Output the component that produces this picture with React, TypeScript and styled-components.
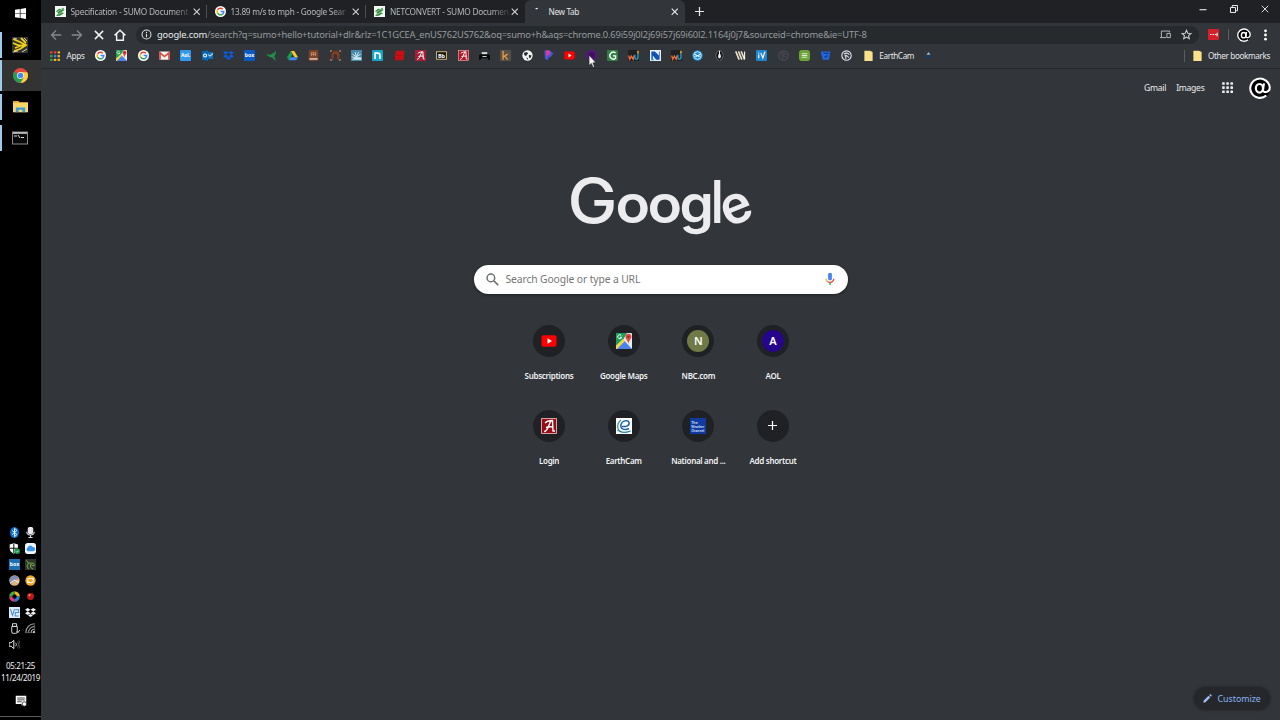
import React from 'react';
import styled, { createGlobalStyle } from 'styled-components';

const Global = createGlobalStyle`
  * { box-sizing: border-box; }
  body { margin: 0; background: #323539; overflow: hidden; }
  body, button, input { font-family: 'Noto Sans', 'Open Sans', sans-serif; }
`;

/* ---------- shell ---------- */
const Desktop = styled.div`
  display: grid;
  grid-template-columns: 41px 1fr;
  width: 1280px;
  height: 720px;
  background: #323539;
  position: relative;
`;
const Taskbar = styled.aside`
  display: flex;
  flex-direction: column;
  background: #000;
  height: 720px;
`;
const StartButton = styled.div`
  height: 29px;
  display: flex;
  align-items: center;
  justify-content: center;
  padding-bottom: 2px;
`;
const TaskItem = styled.div<{ $active?: boolean }>`
  height: 31px;
  display: flex;
  align-items: center;
  justify-content: center;
  background: ${p => (p.$active ? '#333333' : 'transparent')};
  &::before {
    content: '';
    width: 2px;
    margin-right: auto;
    height: ${p => (p.$active ? 31 : 26)}px;
    background: #9ccbee;
  }
  &::after { content: ''; width: 3px; margin-left: auto; }
`;
const Tray = styled.div`
  margin-top: auto;
  display: grid;
  grid-template-columns: 16px 16px;
  grid-auto-rows: 16px;
  place-items: center;
  padding-left: 6px;
`;
const Clock = styled.div`
  height: 36px;
  padding-top: 8px;
  color: #f2f2f2;
  font-size: 8px;
  line-height: 11.5px;
  text-align: center;
  letter-spacing: -0.36px;
  white-space: nowrap;
`;
const Notify = styled.div`
  height: 28px;
  display: flex;
  align-items: center;
  justify-content: center;
  padding-bottom: 3px;
`;
const TaskbarEnd = styled.div`
  height: 4px;
  border-top: 1px solid #5c5c5c;
`;

/* ---------- browser ---------- */
const Browser = styled.main`
  display: flex;
  flex-direction: column;
  min-width: 0;
`;
const TabStrip = styled.header`
  display: flex;
  height: 23px;
  background: #202124;
`;
const Tab = styled.div<{ $active?: boolean; $w: number; $pad?: number; $line?: boolean }>`
  width: ${p => p.$w}px;
  height: 23px;
  display: flex;
  align-items: center;
  padding: 0 7px 0 ${p => p.$pad ?? 7.5}px;
  background: ${p => (p.$active ? '#323539' : 'transparent')};
  border-radius: 6px 6px 0 0;
  color: ${p => (p.$active ? '#e2e4e6' : '#b4b7ba')};
  position: relative;
  &::after {
    content: '';
    position: absolute;
    right: 0;
    top: 5px;
    height: 13px;
    width: 1px;
    background: ${p => (p.$line ? '#4c4f53' : 'transparent')};
  }
`;
const TabTitle = styled.span<{ $ls: number; $fade?: boolean }>`
  flex: 1;
  margin-left: 5px;
  white-space: nowrap;
  font-size: 8.3px;
  line-height: 14px;
  letter-spacing: ${p => p.$ls}px;
  ${p => p.$fade && 'mask-image: linear-gradient(90deg, #000 84%, rgba(0,0,0,.25) 96%);'}
`;
const NewTab = styled.div`
  padding: 7px 0 0 10px;
`;
const WindowButtons = styled.div`
  margin-left: auto;
  display: flex;
  gap: 22.7px;
  padding: 5px 11.5px 0 0;
`;
const Toolbar = styled.div`
  height: 22px;
  display: flex;
  align-items: center;
  background: #323539;
  padding: 1px 0 0 9px;
`;
const NavIcons = styled.div`
  display: flex;
  gap: 9.3px;
  width: 86px;
`;
const Omnibox = styled.div`
  width: 1063px;
  height: 18px;
  border-radius: 9px;
  background: #272a2d;
  display: flex;
  align-items: center;
  padding: 0 7px 0 5px;
  gap: 10px;
`;
const Url = styled.span`
  flex: 1;
  margin-left: -5px;
  font-size: 9.33px;
  line-height: 16px;
  color: #969b9f;
  letter-spacing: -0.185px;
  white-space: nowrap;
  b { font-weight: 400; color: #e8eaed; }
`;
const ToolbarEnd = styled.div`
  display: flex;
  align-items: center;
  padding-left: 9px;
`;
const Divider = styled.i<{ $m: string; $h: number }>`
  width: 1px;
  height: ${p => p.$h}px;
  margin: ${p => p.$m};
  background: #5a5e61;
`;
const Bookmarks = styled.nav`
  height: 24px;
  display: flex;
  align-items: center;
  padding: 0 10px 2px 9px;
  border-bottom: 1px solid #25282b;
  color: #e6e8ea;
`;
const BookmarkText = styled.span<{ $ls: number; $w: number; $ml: number }>`
  font-size: 8.2px;
  line-height: 12px;
  white-space: nowrap;
  width: ${p => p.$w}px;
  margin-left: ${p => p.$ml}px;
  letter-spacing: ${p => p.$ls}px;
`;
const IconRow = styled.div<{ $ml: number }>`
  display: flex;
  gap: 10.33px;
  margin: 0 10.33px 0 ${p => p.$ml}px;
`;

/* ---------- new tab page ---------- */
const Page = styled.section`
  flex: 1;
  display: flex;
  flex-direction: column;
  align-items: center;
`;
const TopLinks = styled.div`
  align-self: stretch;
  height: 37px;
  display: flex;
  align-items: center;
  justify-content: flex-end;
  padding-right: 9px;
`;
const TopLink = styled.a<{ $mr: number }>`
  font-size: 8.6px;
  color: #eceeef;
  letter-spacing: -0.28px;
  margin-right: ${p => p.$mr}px;
`;
const AppsButton = styled.div`
  margin-right: 16.5px;
`;
const Wordmark = styled.svg`
  width: 190px;
  height: 70px;
  margin-top: 59px;
  fill: #ececee;
  font-family: Inter, sans-serif;
`;
const SearchBox = styled.div`
  width: 374px;
  height: 29.5px;
  margin: 29.5px 0 0 1px;
  border-radius: 15px;
  background: #fff;
  display: flex;
  align-items: center;
  padding: 0 12px;
  box-shadow: 0 1px 3px rgba(0, 0, 0, 0.4);
`;
const Placeholder = styled.span`
  flex: 1;
  margin-left: 6.5px;
  color: #757575;
  font-size: 10.3px;
  line-height: 16px;
  letter-spacing: -0.1px;
`;
const Shortcuts = styled.div`
  display: grid;
  grid-template-columns: repeat(4, 74.67px);
  grid-auto-rows: 85.4px;
  margin: 30.5px 0 0 1px;
`;
const Shortcut = styled.div`
  display: flex;
  flex-direction: column;
  align-items: center;
`;
const Disc = styled.div`
  width: 32px;
  height: 32px;
  border-radius: 50%;
  background: #202124;
  display: flex;
  align-items: center;
  justify-content: center;
`;
const ShortcutName = styled.span`
  margin-top: 13.5px;
  font-size: 8px;
  font-weight: 600;
  line-height: 12px;
  color: #f1f3f4;
  letter-spacing: -0.3px;
  white-space: nowrap;
`;
const Monogram = styled.span<{ $bg: string }>`
  width: 22px;
  height: 22px;
  border-radius: 50%;
  background: ${p => p.$bg};
  color: #fff;
  font-size: 11px;
  font-weight: 600;
  line-height: 22px;
  text-align: center;
`;
const Customize = styled.button`
  align-self: flex-end;
  margin: auto 10px 10px 0;
  width: 76px;
  height: 23px;
  border: 0;
  padding: 0 0 0 8px;
  border-radius: 12px;
  background: #25272b;
  box-shadow: 0 0 3px rgba(20, 22, 25, 0.5);
  color: #8ab4f8;
  font-size: 8.8px;
  display: flex;
  align-items: center;
  gap: 4.500px;
`;
const Pointer = styled.svg`
  position: absolute;
  left: 588px;
  top: 54px;
`;

/* ---------- icons, all on a 16 unit square ---------- */
type IconProps = { size?: number; children: React.ReactNode };
const Icon = ({ size = 11, children }: IconProps) => (
  <svg width={size} height={size} viewBox="0 0 16 16" fill="none" display="block">
    {children}
  </svg>
);
const glyph = (s: string, fill: string, fontSize: number, y = 12, extra: React.SVGProps<SVGTextElement> = {}) => (
  <text x="8" y={y} textAnchor="middle" fill={fill} fontSize={fontSize} fontWeight="700" {...extra}>{s}</text>
);
const box = (fill: string) => <rect width="16" height="16" rx="1.5" fill={fill} />;

const GoogleG = () => (
  <>
    <circle cx="8" cy="8" r="8" fill="#fff" />
    <g strokeWidth="2.2">
      <path d="M11.4 4.8A4.8 4.8 0 0 0 3.8 5.6" stroke="#ea4335" />
      <path d="M3.8 5.6a4.8 4.8 0 0 0 0 4.8" stroke="#fbbc05" />
      <path d="M3.8 10.4a4.8 4.8 0 0 0 7.2 1.4" stroke="#34a853" />
      <path d="M11 11.8A4.8 4.8 0 0 0 12.8 8H8" stroke="#4285f4" />
    </g>
  </>
);
const MapsArt = () => (
  <>
    <rect width="16" height="16" rx="1" fill="#e8eaed" />
    <path d="M0 0h11L7 7l-7 7z" fill="#1e9e57" />
    <path d="M0 16 8 7.5 16 16z" fill="#4a82ee" />
    <path d="M0 12.5 7 6l2 2-8 8H0z" fill="#f8d44c" />
    <path d="M12.4.8a3 3 0 0 1 3 3c0 2.2-2.4 3.4-3 7-.6-3.600-3-4.800-3-7a3 3 0 0 1 3-3z" fill="#e14a3d" />
    <circle cx="12.4" cy="3.8" r="1.100" fill="#852b22" />
    <path d="M5.300 2.600A2 2 0 1 0 5.600 4.300H4" stroke="#fff" strokeWidth="1" />
  </>
);
const SumoArt = () => (
  <>
    <rect width="16" height="16" fill="#f2f7f2" />
    <path d="M1.500 7.500 6 4l3 .5L13.500 2 12 5l2 .5-4 3.500 3 1.500L7 14l-5.500.5L5 10.500z" fill="#2f8a3e" />
    <path d="M3 9l5-3M5 12l7-4.500M8 5.500l3-1" stroke="#d5ecd8" strokeWidth=".9" />
  </>
);
const YoutubeArt = () => (
  <>
    <rect x=".5" y="2.300" width="15" height="11.400" rx="2" fill="#f00" />
    <path d="M6.500 5.200v5.600L11 8z" fill="#fff" />
  </>
);
const Dropbox = ({ c }: { c: string }) => (
  <path fill={c} d="M4 1.500 8 4 4 6.500 0 4zM12 1.500 16 4l-4 2.500L8 4zM4 6.500 8 9l-4 2.500L0 9zM12 6.500 16 9l-4 2.500L8 9zM8 10l3.500 2.200L8 14.500l-3.500-2.300z" />
);
const AlabamaArt = ({ bg = '#9e1b32', frame = false }) => (
  <>
    <rect width="16" height="16" fill={bg} />
    {frame && <rect x=".6" y=".6" width="14.800" height="14.800" stroke="#e6c9cc" strokeWidth=".8" />}
    <path d="M3 13.500c2 0 3-1.500 4-4L10 2.500h1.500L12 13h2M4 5c2-2 5-2.500 7-2M5 9.500c2-.8 5-1 7.500-.5" stroke="#fff" strokeWidth="1.400" />
  </>
);
const Folder = () => <path d="M2 1h8l4 2v13H2z" fill="#fbe08a" />;
const Wu = () => (
  <>
    <rect width="16" height="16" fill="#202124" />
    <path d="M1 8l1.500 5.500L5 9l2.500 4.500L9 8" stroke="#ed6b35" strokeWidth="2" />
    <path d="M10 7v4c0 3.500 4.500 3.500 4.500 0V5" stroke="#2aa0c8" strokeWidth="2" />
    <path d="M14.500 1v4" stroke="#ffc23d" strokeWidth="2" />
  </>
);
const LinesCircle = ({ c }: { c: string }) => (
  <>
    <circle cx="8" cy="8" r="6.800" stroke={c} strokeWidth="1.600" />
    <path d="M4 6c3-2 6-2 8 1M5 9c2-1.500 5-1 6 2M7 7v6" stroke={c} strokeWidth="1.500" />
  </>
);

const bookmarkIcons: React.ReactNode[] = [
  <GoogleG />,
  <MapsArt />,
  <GoogleG />,
  <><rect x=".5" y="2" width="15" height="12" rx="1" fill="#f4f4f4" /><path d="M1.500 14V4L8 9.500 14.500 4v10" stroke="#dd4b3e" strokeWidth="2.400" /></>,
  <>{box('#3399ec')}{glyph('Aol.', '#fff', 7, 10.5)}</>,
  <><path d="M6 3h10v10H6z" fill="#1172bd" /><path d="M8 6l3.500 3L16 5" stroke="#bfe0fa" strokeWidth="1.500" /><path d="M0 2l9-1.500v15L0 14z" fill="#0667b4" /><circle cx="4.500" cy="8" r="2.200" stroke="#fff" strokeWidth="1.500" /></>,
  <Dropbox c="#0a5be0" />,
  <>{box('#0a5ac4')}{glyph('box', '#fff', 7.5, 10.5)}</>,
  <path d="M14 0c0 3-3 5-5 5L7 7 0 6l5 4 4 1 5 5c0-3-1-5-2-7 2-2 3-5 2-9z" fill="#1a9348" />,
  <><path d="M5.500 1.500h5l5.500 9h-5z" fill="#fbc92d" /><path d="M5.500 1.500 8 6 2.600 15 0 10.500z" fill="#169c58" /><path d="M5.300 10.500H16L13.400 15H2.600z" fill="#4486f4" /></>,
  <><rect x="1" width="14" height="16" rx="2" fill="#7b4128" /><path d="M4 4h8M4 6.500h8M5 4v5M8 4v5M11 4v5" stroke="#cf9c7c" strokeWidth="1" /><path d="M2 13h12" stroke="#eed8c6" strokeWidth="2" /></>,
  <><path d="M3 14C0 5 4 1 9 1.500c5 0 6 6 4 13L10 13c1-5 0-8-3-7-3 0-1 4-2 8z" fill="#873c1d" /><path d="M1 3V1h2M13 1h2v2M1 13v2h2M13 15h2v-2" stroke="#e8b99d" /></>,
  <><rect width="16" height="16" fill="#4588aa" /><path d="M8 10 2 6M8 10 6 3M8 10l3-7M8 10l6-4M1 10l6 1" stroke="#e6f3f9" strokeWidth="1.300" /><path d="M1 14c5-4 8-4 14-3v3z" fill="#d6ebf3" /></>,
  <>{box('#1aa5c8')}<path d="M4.500 13V4.500H8.500q3 0 3 3V13" stroke="#fff" strokeWidth="2.300" /></>,
  <><path d="M3 1h12l-1 14H1L2 6z" fill="#c90f14" /><path d="M3 8h9M3 12h6" stroke="#a50e12" strokeWidth="1" /></>,
  <AlabamaArt bg="#a51d36" />,
  <><rect y="2" width="16" height="12" fill="#17150f" /><rect x=".8" y="2.500" width="14.400" height="11" stroke="#d3bb83" strokeWidth="1.400" />{glyph('Bb', '#fff', 8, 11)}</>,
  <AlabamaArt bg="#b01522" frame />,
  <><path d="M4 3h8v4H4z" fill="#d3d4d5" /><path d="M2 6h12l2 2v6h-3v-2H3v2H0V8z" fill="#08090a" /><path d="M5 9.500h6" stroke="#eee" strokeWidth="1.300" /></>,
  <><rect width="16" height="16" fill="#55504a" /><path d="M4.500 1v13M11 6l-6 4M7 9l4 5" stroke="#e99a3b" strokeWidth="2" /></>,
  <><circle cx="8" cy="8" r="7.500" fill="#f4f4f4" /><path d="M3 4l4-1 2 2-2 2-1 2-3-2zM10 7l4 1-2 4-2-1zM6 11l3 1-1 2z" fill="#2b2d30" /></>,
  <><path d="M2 1l7-1 6 5-4 5-3 1-1 4-4-2z" fill="#4b55db" /><path d="M4 1c5-2 9 3 5 6l-4 2z" fill="#d83b9c" /></>,
  <YoutubeArt />,
  <circle cx="8" cy="8" r="6.500" stroke="#5b1485" strokeWidth="3" fill="#3d1359" />,
  <>{box('#2f7e44')}<path d="M12.500 4.500A5 5 0 1 0 12.500 12V8.500H8.500" stroke="#fff" strokeWidth="2" /></>,
  <Wu />,
  <><rect width="16" height="16" fill="#e6f0fa" /><path d="M2 2h5l6 6V2h1v12H9L4 8v6H2z" fill="#1551b2" /><path d="M2 8l4 7H2z" fill="#1d9ac9" /></>,
  <Wu />,
  <><circle cx="8" cy="8" r="7.500" fill="#1c8fd6" /><circle cx="8" cy="8" r="5.500" stroke="#dff2ff" strokeWidth="1.300" /><path d="M4 6c3 3 5 3 8 0M5 10l3-2 3 2" stroke="#fff" strokeWidth="1.500" /></>,
  <><circle cx="8" cy="8" r="7" fill="#121314" /><path d="M7 1C1 4 1 12 7 15M9 1c6 3 6 11 0 14" stroke="#aaa" strokeWidth="1" /><path d="M8 1v8" stroke="#fff" strokeWidth="1.400" /><ellipse cx="8" cy="9" rx="2" ry="3.500" fill="#eee" /></>,
  <><path d="M1 2l5 12M5 2l5 12M9 2l5 12" stroke="#eee3c9" strokeWidth="2.300" /><path d="M14 2v11" stroke="#fff" strokeWidth="1.500" /></>,
  <>{box('#1d86cf')}<path d="M4 6.500V12M4 3.500v1.500M7 4.500l3 7 3-9" stroke="#fff" strokeWidth="1.700" /></>,
  <LinesCircle c="#4a4e51" />,
  <><rect width="16" height="16" rx="4.500" fill="#6ca437" /><path d="M4 5.500h8M4 8h8M4 10.500h8" stroke="#e9f5dc" strokeWidth="1.300" /></>,
  <><path d="M1 2h14l-2 12H4z" fill="#2068e0" /><path d="M5 5h8M6 10h4V7" stroke="#123f9a" strokeWidth="1.700" /></>,
  <LinesCircle c="#e8eaed" />,
];

const Cross = ({ size = 7.5, c = '#d4d6d8', w = 2.3 }) => (
  <Icon size={size}><path d="M1.500 1.500l13 13M14.500 1.500l-13 13" stroke={c} strokeWidth={w} /></Icon>
);
const AtBadge = ({ size }: { size: number }) => (
  <Icon size={size}>
    <circle cx="8" cy="8" r="7.600" fill="#000" />
    <ellipse cx="7.600" cy="8.200" rx="2.600" ry="3.100" stroke="#fff" strokeWidth="1.600" />
    <path d="M10.900 4.600 10.200 9.300c-.3 2.600 4.900 2.200 4.900-1.700A7.100 7 0 1 0 12.600 13.500" stroke="#fff" strokeWidth="1.500" />
  </Icon>
);
const Dots = ({ size, colors }: { size: number; colors: string[] }) => (
  <Icon size={size}>
    {colors.map((c, i) => (
      <rect key={i} x={(i % 3) * 6 + 0.2} y={Math.floor(i / 3) * 6 + 0.2} width="3.800" height="3.800" rx=".8" fill={c} />
    ))}
  </Icon>
);

const trayIcons: React.ReactNode[] = [
  <><ellipse cx="8" cy="8" rx="6.500" ry="8" fill="#0a6fd0" /><path d="M4.500 5l7 6L8 14V2l3.500 3-7 6" stroke="#fff" strokeWidth="1.300" /></>,
  <><rect x="4" y="0" width="8" height="10" rx="2.500" fill="#e8e8e8" /><path d="M2.500 7c0 6 11 6 11 0M8 12v4M5 15.300h6" stroke="#ddd" strokeWidth="1.500" /></>,
  <><path d="M1 2l6-1.500L13 2v6c0 4-3 6-6 7.500C4 14 1 12 1 8z" fill="#fff" /><path d="M7 1v14M1 7.500h12" stroke="#111" strokeWidth="1.500" /><circle cx="12" cy="12" r="4" fill="#129a48" /><path d="M10 12l1.500 1.500L14 11" stroke="#fff" /></>,
  <><rect width="16" height="16" rx="4" fill="#f3f8fd" /><path d="M4 12a3 3 0 0 1 0-5.500 4 4 0 0 1 7.500-.5A3 3 0 0 1 12 12z" fill="#3b94ee" /></>,
  <><rect width="16" height="16" fill="#1a6fb5" />{glyph('box', '#fff', 7.5, 10.5)}</>,
  <><rect width="16" height="16" fill="#30342e" /><path d="M2 2l3 4h7l2 3-2 1-4-2v4l4 3M5 6l-2 4 2 5" stroke="#79b84a" strokeWidth="1.300" /></>,
  <><circle cx="8" cy="8" r="7.500" fill="#e0b27c" /><path d="M.5 8a7.500 7.500 0 0 1 14-3.500L9 8l-6 5z" fill="#7d8fb8" /><path d="M1.500 12 8 7.500l6.500 3.500" stroke="#f1e6d8" strokeWidth="1.500" /></>,
  <><circle cx="8" cy="8" r="7.500" fill="#f2a51f" /><path d="M4 7.500c0-3 5-4 8-1V4M12 8.500c0 3-5 4-8 1V12" stroke="#fff" strokeWidth="1.700" /></>,
  <g strokeWidth="4.500"><path d="M8 2.500A5.500 5.500 0 0 1 13.500 8" stroke="#f3b91b" /><path d="M13.500 8A5.500 5.500 0 0 1 8 13.500" stroke="#2f7ed8" /><path d="M8 13.500A5.500 5.500 0 0 1 2.500 8" stroke="#e43a7a" /><path d="M2.500 8A5.500 5.500 0 0 1 8 2.500" stroke="#48a84a" /></g>,
  <><circle cx="8" cy="8" r="5" fill="#c01818" /><circle cx="6.500" cy="6" r="1.500" fill="#ef8580" /></>,
  <><rect width="16" height="16" fill="#dcebf7" /><path d="M2 3l3 9 3-9M9 4h5v4H9v5h5" stroke="#4b8cc4" strokeWidth="1.500" /></>,
  <Dropbox c="#f3f3f3" />,
  <><path d="M5 1h6v4H5zM4 5h8v8q0 2-2 2H6q-2 0-2-2z" stroke="#ddd" strokeWidth="1.400" /><path d="M11 12l2 2 3-4" stroke="#ddd" strokeWidth="1.400" /></>,
  <><path d="M1 14A13 13 0 0 1 14 1M5 14a9 9 0 0 1 9-9M9 14a5 5 0 0 1 5-5" stroke="#aaa" strokeWidth="1.500" /><path d="M1 14h13V2" stroke="#777" /><circle cx="13" cy="13" r="1.500" fill="#ddd" /></>,
  <><path d="M0 5.500h3L7 2v12l-4-3.500H0z" stroke="#eee" strokeWidth="1.400" /><path d="M9.500 5.500c1.500 1.500 1.500 3.500 0 5" stroke="#eee" strokeWidth="1.300" /><path d="M12 3.500c2.500 3 2.500 6 0 9M14.300 2c2.500 4 2.500 8 0 12" stroke="#666" strokeWidth="1.200" /></>,
];

const shortcuts: { name: string; art: React.ReactNode }[] = [
  { name: 'Subscriptions', art: <Icon size={16}><YoutubeArt /></Icon> },
  { name: 'Google Maps', art: <Icon size={16}><MapsArt /></Icon> },
  { name: 'NBC.com', art: <Monogram $bg="#6f7a47">N</Monogram> },
  { name: 'AOL', art: <Monogram $bg="#24058c">A</Monogram> },
  { name: 'Login', art: <Icon size={16}><AlabamaArt bg="#980c16" frame /></Icon> },
  {
    name: 'EarthCam',
    art: (
      <Icon size={16}>
        <rect width="16" height="16" fill="#fff" />
        <path d="M6 8.500c4 .5 8-1 7-4-1-3-7-2-8 2-1 5 4 6 8 4" stroke="#1c63a8" strokeWidth="1.500" />
        <path d="M5 2C0 6 1 13 6 14c3 1 6 0 8-1" stroke="#2c9a86" strokeWidth="1.200" />
        <path d="M1 12c4 3 9 3 14 1" stroke="#2b7dbd" strokeWidth=".8" />
      </Icon>
    ),
  },
  {
    name: 'National and ...',
    art: (
      <Icon size={16}>
        <rect width="16" height="16" fill="#113a9f" />
        <g fill="#dfe8fb" fontSize="3.600" fontWeight="600">
          <text x="1.300" y="6">The</text>
          <text x="1.300" y="10" textLength="13" lengthAdjust="spacingAndGlyphs">Weather</text>
          <text x="1.300" y="14" textLength="13" lengthAdjust="spacingAndGlyphs">Channel</text>
        </g>
      </Icon>
    ),
  },
  { name: 'Add shortcut', art: <Icon size={9}><path d="M8 0v16M0 8h16" stroke="#fff" strokeWidth="2.200" /></Icon> },
];

/* letter, left edge, advance width, font size, weight */
const letters: [string, number, number, number, number][] = [
  ['G', 1.4, 50, 62, 500],
  ['o', 49.6, 34.6, 53, 600],
  ['o', 81.6, 34.6, 53, 600],
  ['g', 113.6, 34.4, 53, 600],
  ['l', 145, 12.5, 59, 600],
];

export default function App() {
  return (
    <Desktop>
      <Global />
      <Taskbar>
        <StartButton>
          <Icon size={11}><path d="M0 2.500 7 1.500v6H0zM8 1.300 16 0v7.500H8zM0 8.500h7v6L0 13.500zM8 8.500h8V16l-8-1.300z" fill="#fff" /></Icon>
        </StartButton>
        <TaskItem>
          <Icon size={16}>
            <rect width="16" height="16" fill="#35362c" />
            <path d="M1 2l7 3 6 3-6 4-6 2M1 6l6 2.500 6 0M9 1l5 5M3 11l5-2" stroke="#f2d119" strokeWidth="1.800" />
            <path d="M1 15l5-1M12 1l3 3M10 15l5-3M2 1l3 1" stroke="#c9c9be" strokeWidth="1" />
          </Icon>
        </TaskItem>
        <TaskItem $active>
          <Icon size={15}>
            <circle cx="8" cy="8" r="8" fill="#e5483b" />
            <path d="M8 8 1.100 4A8 8 0 0 0 8 16l3.500-6z" fill="#249e57" />
            <path d="M8 4.500h7.200A8 8 0 0 1 8 16l3.500-6z" fill="#fdd03b" />
            <circle cx="8" cy="8" r="3.700" fill="#f4f4f4" />
            <circle cx="8" cy="8" r="2.900" fill="#4a87ee" />
          </Icon>
        </TaskItem>
        <TaskItem>
          <Icon size={15}>
            <path d="M0 2h6l1 1.500h9V14H0z" fill="#e5a92c" />
            <path d="M0 4h16v10H0z" fill="#fbd768" />
            <path d="M3 14V9h10v5h-3v-2.500H6V14z" fill="#3d9bd8" />
          </Icon>
        </TaskItem>
        <TaskItem>
          <Icon size={16}>
            <rect x=".5" y="2" width="15" height="12" fill="#0a0a0a" stroke="#8a8a8a" />
            <path d="M1 3h14" stroke="#ddd" strokeWidth="1.500" />
            <path d="M2 6h3M6 5l2 3M9 7.500h3" stroke="#ddd" strokeWidth="1" />
          </Icon>
        </TaskItem>
        <Tray>
          {trayIcons.map((art, i) => <Icon key={i} size={11}>{art}</Icon>)}
        </Tray>
        <Clock>05:21:25<br />11/24/2019</Clock>
        <Notify>
          <Icon size={12}>
            <path d="M1 1h14v11h-4v3l-3-3H1z" fill="#fff" />
            <path d="M3 4h10M3 6.500h10M3 9h6" stroke="#111" strokeWidth="1" />
            <circle cx="12.500" cy="12" r="3" fill="#fff" stroke="#111" />
          </Icon>
        </Notify>
        <TaskbarEnd />
      </Taskbar>

      <Browser>
        <TabStrip>
          <Tab $w={166} $pad={13.5} $line><Icon><SumoArt /></Icon><TabTitle $fade $ls={-0.22}>Specification - SUMO Document</TabTitle><Cross /></Tab>
          <Tab $w={159} $line><Icon><GoogleG /></Icon><TabTitle $fade $ls={-0.28}>13.89 m/s to mph - Google Sear</TabTitle><Cross /></Tab>
          <Tab $w={159} $pad={8}><Icon><SumoArt /></Icon><TabTitle $fade $ls={-0.22}>NETCONVERT - SUMO Documen</TabTitle><Cross /></Tab>
          <Tab $w={160} $pad={8.5} $active><Icon size={10}><path d="M2.500 2.500H6" stroke="#eee" strokeWidth="2" /></Icon><TabTitle $ls={-0.4}>New Tab</TabTitle><Cross c="#eee" /></Tab>
          <NewTab><Icon size={9}><path d="M8 0v16M0 8h16" stroke="#e4e6e8" strokeWidth="2.200" /></Icon></NewTab>
          <WindowButtons>
            <Icon size={8}><path d="M1 9.500h14" stroke="#fff" strokeWidth="2" /></Icon>
            <Icon size={8}><path d="M1 5h10v10H1zM4.500 4.500V1H15v10.500h-3.500" stroke="#fff" strokeWidth="1.800" /></Icon>
            <Cross size={8} c="#fff" w={1.7} />
          </WindowButtons>
        </TabStrip>

        <Toolbar>
          <NavIcons>
            <Icon size={12}><path d="M15 8H2M8 2 2 8l6 6" stroke="#85898c" strokeWidth="1.700" /></Icon>
            <Icon size={12}><path d="M1 8h13M8 2l6 6-6 6" stroke="#85898c" strokeWidth="1.700" /></Icon>
            <Icon size={12}><path d="M2.500 2.500l11 11M13.500 2.500l-11 11" stroke="#f1f3f4" strokeWidth="1.900" /></Icon>
            <Icon size={12}><path d="M.8 8.500 8 1.500l7.200 7M3.500 6.500V15h9V6.500" stroke="#f1f3f4" strokeWidth="1.900" /></Icon>
          </NavIcons>
          <Omnibox>
            <Icon size={11}><circle cx="8" cy="8" r="6.500" stroke="#dcdfe1" strokeWidth="1.500" /><path d="M8 7v5M8 4v1.700" stroke="#dcdfe1" strokeWidth="1.600" /></Icon>
            <Url><b>google.com</b>/search?q=sumo+hello+tutorial+dlr&amp;rlz=1C1GCEA_enUS762US762&amp;oq=sumo+h&amp;aqs=chrome.0.69i59j0l2j69i57j69i60l2.1164j0j7&amp;sourceid=chrome&amp;ie=UTF-8</Url>
            <Icon size={11}><path d="M9 12.500H0M2 12V3h12v2M10 6.500h5v6h-5z" stroke="#b6babd" strokeWidth="1.400" /></Icon>
            <Icon size={11}><path d="M8 1.800l1.900 4.300 4.700.4-3.600 3.100 1.100 4.600L8 11.700l-4.100 2.500L5 9.600 1.400 6.500l4.700-.4z" stroke="#cdd0d2" strokeWidth="1.500" /></Icon>
          </Omnibox>
          <ToolbarEnd>
            <Icon size={11}><rect width="16" height="16" rx="1.500" fill="#d3202a" /><path d="M3 8h2M6.500 8h2M10 8h2M13.300 5.500v5" stroke="#fff" strokeWidth="1.500" /></Icon>
            <Divider $h={11} $m="0 8px 0 9px" />
            <AtBadge size={14} />
            <Icon size={16}><circle cx="14.500" cy="3.800" r="1.400" fill="#fff" /><circle cx="14.500" cy="8" r="1.400" fill="#fff" /><circle cx="14.500" cy="12.200" r="1.400" fill="#fff" /></Icon>
          </ToolbarEnd>
        </Toolbar>

        <Bookmarks>
          <Dots size={10} colors={['#e5483b', '#e5483b', '#f2b622', '#37a653', '#4a87ee', '#f2b622', '#37a653', '#f2b622', '#f2b622']} />
          <BookmarkText $ls={-0.25} $ml={6.5} $w={19}>Apps</BookmarkText>
          <IconRow $ml={9.5}>{bookmarkIcons.map((art, i) => <Icon key={i}>{art}</Icon>)}</IconRow>
          <Icon><Folder /></Icon>
          <BookmarkText $ls={-0.4} $ml={5.5} $w={35}>EarthCam</BookmarkText>
          <IconRow $ml={9}><Icon><path d="M8 3l3 4H5z" fill="#8fb7ea" /><path d="M1 11c4-4 10-4 14 0z" fill="#1b3a6b" /></Icon></IconRow>
          <Divider $h={12} $m="0 7px 0 auto" />
          <Icon><Folder /></Icon>
          <BookmarkText $ls={-0.38} $ml={5} $w={62}>Other bookmarks</BookmarkText>
        </Bookmarks>

        <Page>
          <TopLinks>
            <TopLink $mr={10}>Gmail</TopLink>
            <TopLink $mr={17}>Images</TopLink>
            <AppsButton><Dots size={11} colors={Array(9).fill('#eceeef')} /></AppsButton>
            <AtBadge size={22} />
          </TopLinks>
          <Wordmark viewBox="0 0 190 70">
            {letters.map(([ch, x, w, size, weight], i) => (
              <text key={i} x={x} y="58.300" fontSize={size} fontWeight={weight} textLength={w} lengthAdjust="spacingAndGlyphs">{ch}</text>
            ))}
            <text fontSize="53" fontWeight="600" textLength="31" lengthAdjust="spacingAndGlyphs" transform="translate(170.500 43.500) rotate(-22)" x="-15.500" y="14.500">e</text>
          </Wordmark>
          <SearchBox>
            <Icon size={13}><circle cx="6" cy="6" r="4.700" stroke="#6b6f73" strokeWidth="1.800" /><path d="M9.500 9.500l5.500 5.500" stroke="#6b6f73" strokeWidth="2" /></Icon>
            <Placeholder>Search Google or type a URL</Placeholder>
            <Icon size={12}>
              <rect x="5.500" y="0" width="5" height="9.500" rx="1.500" fill="#4285f4" />
              <path d="M2.800 7.500A5.200 5.200 0 0 0 4.500 11.200" stroke="#f2b01e" strokeWidth="1.600" />
              <path d="M4.500 11.200A5.200 5.200 0 0 0 13.200 7.500" stroke="#ea4335" strokeWidth="1.600" />
              <path d="M8 12.500V16" stroke="#34a853" strokeWidth="1.800" />
            </Icon>
          </SearchBox>
          <Shortcuts>
            {shortcuts.map(s => (
              <Shortcut key={s.name}><Disc>{s.art}</Disc><ShortcutName>{s.name}</ShortcutName></Shortcut>
            ))}
          </Shortcuts>
          <Customize>
            <Icon size={11}><path d="M2 14l.5-3 7-7L12 6.500l-7 7zM10.500 3 12 1.500 14.500 4 13 5.500z" fill="#9dbdf5" /></Icon>
            Customize
          </Customize>
        </Page>
      </Browser>
      <Pointer width="9" height="15" viewBox="0 0 9 15"><path d="M1 1v10.500l2.300-2.100 1.700 4 1.600-.7-1.700-3.900H8z" fill="#fff" stroke="#222" strokeWidth=".7" /></Pointer>
    </Desktop>
  );
}
